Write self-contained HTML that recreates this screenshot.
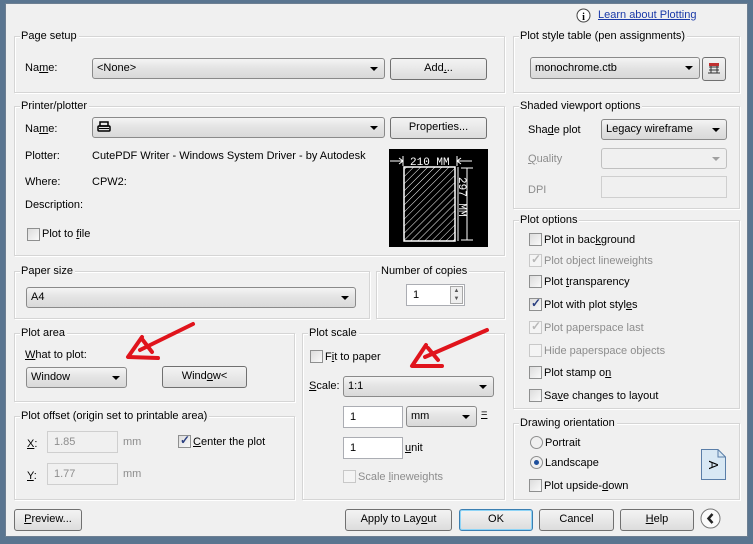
<!DOCTYPE html>
<html><head><style>
*{box-sizing:border-box;margin:0;padding:0}
body{width:753px;height:544px;overflow:hidden;background:#5a7590;font-family:"Liberation Sans",sans-serif;font-size:11px;color:#000;position:relative}
#dlg{position:absolute;left:5px;top:3px;width:743px;height:534px;background:#f0f0f0;border:1px solid #6d7f92}
.a{position:absolute;white-space:nowrap}
.g{position:absolute;border:1px solid #d5d5d5;box-shadow:inset 1px 1px 0 #fff,1px 1px 0 #fff}
.gt{position:absolute;background:#f0f0f0;padding:0 2px 0 1px;white-space:nowrap;line-height:14px}
.cb{position:absolute;height:21px;border:1px solid #8a8a8a;border-radius:3px;background:linear-gradient(#f4f4f4,#e3e3e3 50%,#d9d9d9);padding:2px 4px;white-space:nowrap;line-height:15px}
.cb:after{content:"";position:absolute;right:6px;top:8px;border:4px solid transparent;border-top:4px solid #000;border-bottom:0}
.cb.dis{border-color:#c0c0c0;background:#f0f0f0}
.cb.dis:after{border-top-color:#a0a0a0}
.bt{position:absolute;height:22px;border:1px solid #707070;border-radius:3px;background:linear-gradient(#f3f3f3,#e8e8e8 50%,#dcdcdc);text-align:center;line-height:19px}
.tx{position:absolute;height:22px;border:1px solid #abadb3;background:#fff;padding:3px 6px;line-height:14px}
.tx.dis{background:#f0f0f0;border-color:#cfcfcf;color:#8d8d8d}
.ck{position:absolute;width:13px;height:13px;border:1px solid #8e8f8f;background:linear-gradient(135deg,#dcdcdc,#fafafa)}
.ck.dis{border-color:#c8c8c8;background:#f4f4f4}
.ck.on:after{content:"✓";position:absolute;left:1px;top:-3px;font-size:12px;color:#2a3f80;font-weight:bold}
.ck.dis.on:after{color:#b8b8b8}
.lb{position:absolute;white-space:nowrap;line-height:14px}
.gr{color:#8d8d8d}
u{text-decoration:underline}
</style></head><body>
<div id="dlg"></div>

<div class="g" style="left:14px;top:36px;width:491px;height:57px"></div><div class="gt" style="left:20px;top:29px">Page setup</div>
<div class="g" style="left:14px;top:106px;width:491px;height:150px"></div><div class="gt" style="left:20px;top:99px">Printer/plotter</div>
<div class="g" style="left:14px;top:271px;width:356px;height:48px"></div><div class="gt" style="left:20px;top:264px">Paper size</div>
<div class="g" style="left:376px;top:271px;width:129px;height:48px"></div><div class="gt" style="left:380px;top:264px">Number of copies</div>
<div class="g" style="left:14px;top:333px;width:281px;height:69px"></div><div class="gt" style="left:20px;top:326px">Plot area</div>
<div class="g" style="left:14px;top:416px;width:281px;height:84px"></div><div class="gt" style="left:20px;top:409px">Plot offset (origin set to printable area)</div>
<div class="g" style="left:302px;top:333px;width:203px;height:167px"></div><div class="gt" style="left:308px;top:326px">Plot scale</div>
<div class="g" style="left:513px;top:36px;width:227px;height:57px"></div><div class="gt" style="left:519px;top:29px">Plot style table (pen assignments)</div>
<div class="g" style="left:513px;top:106px;width:227px;height:103px"></div><div class="gt" style="left:519px;top:99px">Shaded viewport options</div>
<div class="g" style="left:513px;top:220px;width:227px;height:189px"></div><div class="gt" style="left:519px;top:213px">Plot options</div>
<div class="g" style="left:513px;top:423px;width:227px;height:77px"></div><div class="gt" style="left:519px;top:416px">Drawing orientation</div>

<div class="lb" style="left:25px;top:61px">Na<u>m</u>e:</div>
<div class="cb" style="left:92px;top:58px;width:293px">&lt;None&gt;</div>
<div class="bt" style="left:390px;top:58px;width:97px">Add<u>.</u>..</div>

<div class="lb" style="left:25px;top:122px">Na<u>m</u>e:</div>
<div class="cb" style="left:92px;top:117px;width:293px"><svg width="14" height="12" viewBox="0 0 14 12" style="margin-top:1px"><rect x="3" y="1" width="8" height="4" fill="none" stroke="#000" stroke-width="1.5"/><rect x="1" y="5" width="12" height="5" rx="1" fill="none" stroke="#000" stroke-width="1.5"/><line x1="2" y1="7.5" x2="12" y2="7.5" stroke="#000"/></svg></div>
<div class="bt" style="left:390px;top:117px;width:97px">Properties...</div>
<div class="lb" style="left:25px;top:149px">Plotter:</div><div class="lb" style="left:92px;top:149px">CutePDF Writer - Windows System Driver - by Autodesk</div>
<div class="lb" style="left:25px;top:175px">Where:</div><div class="lb" style="left:92px;top:175px">CPW2:</div>
<div class="lb" style="left:25px;top:198px">Description:</div>
<div class="ck" style="left:27px;top:228px"></div><div class="lb" style="left:42px;top:227px">Plot to <u>f</u>ile</div>
<svg class="a" style="left:389px;top:149px" width="99" height="98" viewBox="0 0 99 98">
<rect width="99" height="98" fill="#000"/>
<defs><pattern id="h" width="5" height="5" patternUnits="userSpaceOnUse" patternTransform="rotate(45)"><line x1="0" y1="0" x2="0" y2="5" stroke="#fff" stroke-width="1"/></pattern></defs>
<rect x="15" y="18" width="51" height="74" fill="url(#h)" stroke="#fff" stroke-width="1.5"/>
<line x1="69" y1="18" x2="69" y2="92" stroke="#fff"/>
<g stroke="#fff" fill="none"><path d="M1 12H14M10 9l4 3-4 3M14 7v10"/><path d="M83 12H68M72 9l-4 3 4 3M68 7v10"/><path d="M72 19h12M72 91h12M78 19v72"/></g>
<text x="21" y="16" fill="#fff" font-family="Liberation Mono" font-size="11">210 MM</text>
<text transform="translate(70,28) rotate(90)" fill="#fff" font-family="Liberation Mono" font-size="11">297 MM</text>
</svg>

<div class="cb" style="left:26px;top:287px;width:330px">A4</div>
<div class="tx" style="left:406px;top:284px;width:59px;padding-left:6px">1</div>
<div class="a" style="left:450px;top:286px;width:13px;height:18px;border:1px solid #a8a8a8;background:#eee;font-size:6px;line-height:8px;text-align:center;color:#555">▲<br>▼</div>

<div class="lb" style="left:25px;top:348px"><u>W</u>hat to plot:</div>
<div class="cb" style="left:26px;top:367px;width:101px">Window</div>
<div class="bt" style="left:162px;top:366px;width:85px">Wind<u>o</u>w&lt;</div>

<div class="lb" style="left:27px;top:437px"><u>X</u>:</div>
<div class="tx dis" style="left:47px;top:431px;width:71px">1.85</div><div class="lb gr" style="left:123px;top:435px;font-size:11px">mm</div>
<div class="ck on" style="left:178px;top:435px"></div><div class="lb" style="left:193px;top:435px"><u>C</u>enter the plot</div>
<div class="lb" style="left:27px;top:469px"><u>Y</u>:</div>
<div class="tx dis" style="left:47px;top:463px;width:71px">1.77</div><div class="lb gr" style="left:123px;top:467px;font-size:11px">mm</div>

<div class="ck" style="left:310px;top:350px"></div><div class="lb" style="left:325px;top:350px">F<u>i</u>t to paper</div>
<div class="lb" style="left:309px;top:379px"><u>S</u>cale:</div>
<div class="cb" style="left:343px;top:376px;width:151px">1:1</div>
<div class="tx" style="left:343px;top:406px;width:60px">1</div>
<div class="cb" style="left:406px;top:406px;width:71px">mm</div>
<div class="lb" style="left:481px;top:407px"><u>=</u></div>
<div class="tx" style="left:343px;top:437px;width:60px">1</div>
<div class="lb" style="left:405px;top:441px"><u>u</u>nit</div>
<div class="ck dis" style="left:343px;top:470px"></div><div class="lb gr" style="left:358px;top:470px">Scale <u>l</u>ineweights</div>

<svg class="a" style="left:576px;top:8px" width="15" height="15"><circle cx="7.5" cy="7.5" r="6.5" fill="#fff" stroke="#444"/><text x="7.5" y="12" text-anchor="middle" font-size="10" font-weight="bold" font-family="Liberation Serif">i</text></svg>
<div class="lb" style="left:598px;top:8px;color:#1a3aa8"><u>Learn about Plotting</u></div>
<div class="cb" style="left:530px;top:57px;width:170px;height:22px;padding-top:3px">monochrome.ctb</div>
<div class="bt" style="left:702px;top:57px;width:24px;height:24px"><svg width="14" height="14" viewBox="0 0 14 14" style="margin-top:4px"><rect x="2" y="1" width="10" height="3" fill="#c03030"/><path d="M2 5h10M2 8h10M4 4v7M10 4v7M1 11h12" stroke="#333" fill="none"/></svg></div>
<div class="lb" style="left:528px;top:123px">Sha<u>d</u>e plot</div>
<div class="cb" style="left:601px;top:119px;width:126px">Legacy wireframe</div>
<div class="lb gr" style="left:528px;top:152px"><u>Q</u>uality</div>
<div class="cb dis" style="left:601px;top:148px;width:126px"></div>
<div class="lb gr" style="left:528px;top:183px">DPI</div>
<div class="tx dis" style="left:601px;top:176px;width:126px"></div>

<div class="ck" style="left:529px;top:233px"></div><div class="lb" style="left:544px;top:233px">Plot in bac<u>k</u>ground</div>
<div class="ck dis on" style="left:529px;top:254px"></div><div class="lb gr" style="left:544px;top:254px">Plot object lineweights</div>
<div class="ck" style="left:529px;top:275px"></div><div class="lb" style="left:544px;top:275px">Plot <u>t</u>ransparency</div>
<div class="ck on" style="left:529px;top:298px"></div><div class="lb" style="left:544px;top:298px">Plot with plot styl<u>e</u>s</div>
<div class="ck dis on" style="left:529px;top:321px"></div><div class="lb gr" style="left:544px;top:321px">Plot paperspace last</div>
<div class="ck dis" style="left:529px;top:344px"></div><div class="lb gr" style="left:544px;top:344px">Hide paperspace ob<u>j</u>ects</div>
<div class="ck" style="left:529px;top:366px"></div><div class="lb" style="left:544px;top:366px">Plot stamp o<u>n</u></div>
<div class="ck" style="left:529px;top:389px"></div><div class="lb" style="left:544px;top:389px">Sa<u>v</u>e changes to layout</div>

<div class="a" style="left:530px;top:436px;width:13px;height:13px;border-radius:50%;border:1px solid #8e8f8f;background:#f0f0f0"></div><div class="lb" style="left:545px;top:436px">Portrait</div>
<div class="a" style="left:530px;top:456px;width:13px;height:13px;border-radius:50%;border:1px solid #8e8f8f;background:#f0f0f0"><div style="position:absolute;left:3px;top:3px;width:5px;height:5px;border-radius:50%;background:#1e4f9c"></div></div><div class="lb" style="left:545px;top:456px">Landscape</div>
<div class="ck" style="left:529px;top:479px"></div><div class="lb" style="left:544px;top:479px">Plot upside-<u>d</u>own</div>
<svg class="a" style="left:701px;top:449px" width="25" height="31" viewBox="0 0 25 31"><path d="M0.5 0.5H17L24.5 8V30.5H0.5Z" fill="#d8e8f4" stroke="#5a7ea8"/><path d="M17 0.5V8H24.5" fill="none" stroke="#5a7ea8"/><text transform="translate(8,16) rotate(90)" text-anchor="middle" font-size="13" font-family="Liberation Sans">A</text></svg>

<div class="bt" style="left:14px;top:509px;width:68px"><u>P</u>review...</div>
<div class="bt" style="left:345px;top:509px;width:107px">Apply to Lay<u>o</u>ut</div>
<div class="bt" style="left:459px;top:509px;width:74px;border-color:#3c7fb1;box-shadow:inset 0 0 0 1px #8ed4f6">OK</div>
<div class="bt" style="left:539px;top:509px;width:75px">Cancel</div>
<div class="bt" style="left:620px;top:509px;width:74px"><u>H</u>elp</div>
<svg class="a" style="left:700px;top:508px" width="21" height="21"><circle cx="10.5" cy="10.5" r="9.5" fill="#fafafa" stroke="#777"/><path d="M12.5 6l-4 4.5 4 4.5" fill="none" stroke="#222" stroke-width="2.5"/></svg>

<svg class="a" style="left:0;top:0" width="753" height="544">
<g stroke="#e0141c" stroke-width="4" fill="none" stroke-linecap="round" stroke-linejoin="round">
<path d="M193 324L140 350"/><path d="M142 337L128 357L158 358"/><path d="M142 339L152 352"/>
<path d="M487 330L425 357"/><path d="M426 345L412 366L442 366"/><path d="M428 348L438 360"/>
</g></svg>
</body></html>
